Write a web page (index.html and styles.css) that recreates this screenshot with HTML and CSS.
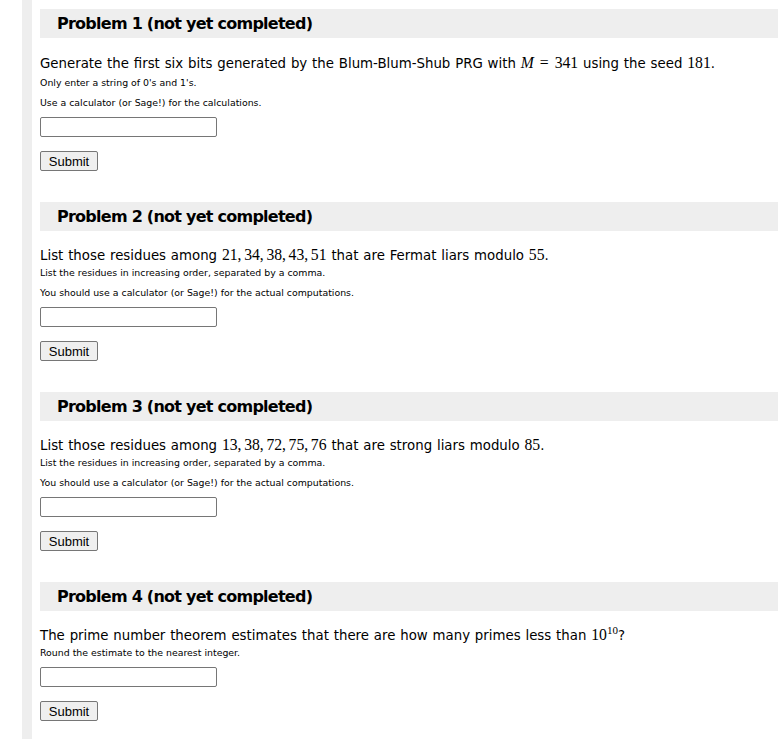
FILE: index.html
```html
<!DOCTYPE html>
<html>
<head>
<meta charset="utf-8">
<link rel="stylesheet" href="styles.css">
</head>
<body>
<div class="page">
  <section class="problem tall">
    <h3 class="head">Problem 1 (not yet completed)</h3>
    <p class="q">Generate the first six bits generated by the Blum-Blum-Shub PRG with <span class="m"><i>M</i><span class="rel">=</span>341</span> using the seed <span class="m">181</span>.</p>
    <p class="note">Only enter a string of 0's and 1's.</p>
    <p class="note gap">Use a calculator (or Sage!) for the calculations.</p>
    <input class="ans" type="text">
    <button class="btn">Submit</button>
  </section>
  <section class="problem">
    <h3 class="head">Problem 2 (not yet completed)</h3>
    <p class="q">List those residues among <span class="m">21, 34, 38, 43, 51</span> that are Fermat liars modulo <span class="m">55</span>.</p>
    <p class="note">List the residues in increasing order, separated by a comma.</p>
    <p class="note gap">You should use a calculator (or Sage!) for the actual computations.</p>
    <input class="ans" type="text">
    <button class="btn">Submit</button>
  </section>
  <section class="problem">
    <h3 class="head">Problem 3 (not yet completed)</h3>
    <p class="q">List those residues among <span class="m">13, 38, 72, 75, 76</span> that are strong liars modulo <span class="m">85</span>.</p>
    <p class="note">List the residues in increasing order, separated by a comma.</p>
    <p class="note gap">You should use a calculator (or Sage!) for the actual computations.</p>
    <input class="ans" type="text">
    <button class="btn">Submit</button>
  </section>
  <section class="problem">
    <h3 class="head">Problem 4 (not yet completed)</h3>
    <p class="q">The prime number theorem estimates that there are how many primes less than <span class="m">10<sup>10</sup></span>?</p>
    <p class="note">Round the estimate to the nearest integer.</p>
    <input class="ans" type="text">
    <button class="btn">Submit</button>
  </section>
</div>
</body>
</html>
```
FILE: styles.css
```css
html, body {
  margin: 0;
  padding: 0;
  background: #fff;
}
body {
  font-family: Verdana, "DejaVu Sans", sans-serif;
  color: #000;
}
.page {
  margin-left: 22px;
  border-left: 10px solid #eeeeee;
  padding: 9px 0 0 8px;
  min-height: 730px;
}
.problem {
  display: flex;
  flex-direction: column;
  align-items: flex-start;
  margin-bottom: 31px;
}
.head {
  align-self: stretch;
  margin: 0;
  height: 29px;
  line-height: 29px;
  padding-left: 17px;
  background: #eeeeee;
  font-size: 16px;
  font-weight: bold;
  letter-spacing: -0.75px;
}
.q {
  margin: 16px 0 0;
  font-size: 13.33px;
  line-height: 16px;
  word-spacing: 0.6px;
}
.tall .q {
  margin-top: 17px;
}
.m {
  font-family: "Liberation Serif", "Times New Roman", serif;
  font-size: 15.7px;
  line-height: 16px;
  word-spacing: -1.3px;
}
.m i {
  font-style: italic;
}
.rel {
  padding: 0 6px;
}
.m sup {
  font-size: 11px;
  line-height: 0;
  vertical-align: 6px;
}
.note {
  margin: 3px 0 0;
  font-size: 9.4px;
  line-height: 12px;
}
.tall .note {
  margin-top: 5px;
}
.note.gap,
.tall .note.gap {
  margin-top: 8px;
}
.ans {
  margin: 8px 0 0;
  box-sizing: border-box;
  width: 177px;
  height: 20px;
  border: 1px solid #767676;
  border-radius: 2px;
  padding: 0 3px;
  background: #fff;
}
.btn {
  margin: 14px 0 0;
  box-sizing: border-box;
  width: 58px;
  height: 20px;
  padding: 0;
  border: 1px solid #767676;
  border-radius: 2px;
  background: #efefef;
  font-family: "Liberation Sans", Arial, sans-serif;
  font-size: 13px;
  color: #000;
}
```
